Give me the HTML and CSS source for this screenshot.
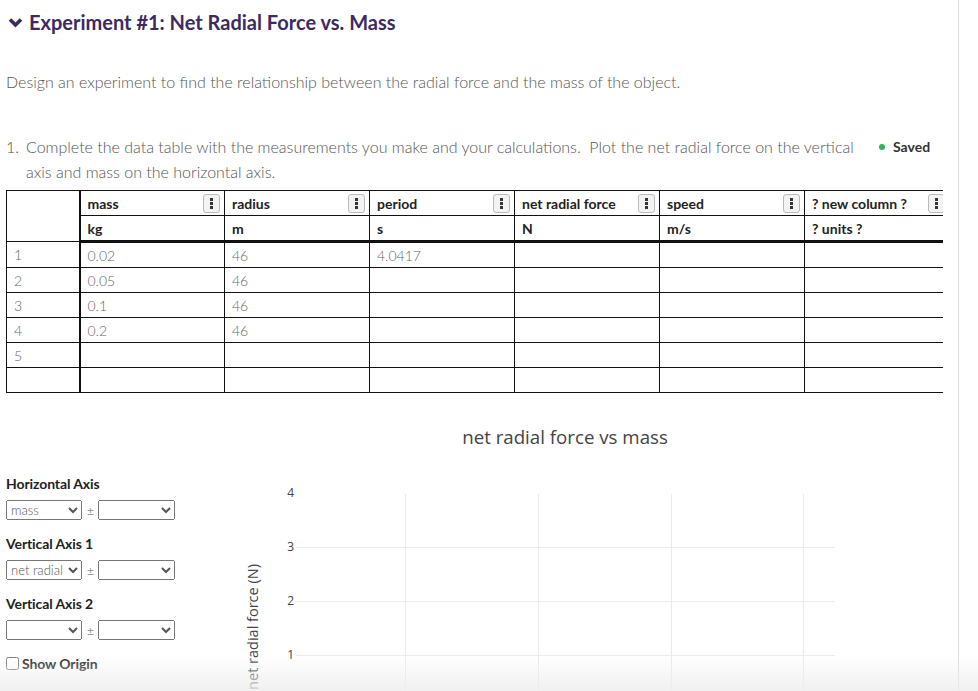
FILE: index.html
```html
<!DOCTYPE html>
<html lang="en">
<head>
    <meta charset="UTF-8">
    <meta name="viewport" content="width=device-width, initial-scale=1.0">
    <title>Experiment #1: Net Radial Force vs. Mass</title>
    <link rel="stylesheet" href="styles.css">
</head>
<body>
    <div class="page">
        <h2 class="exp-title">
            <svg class="chevron" width="15" height="11" viewBox="0 0 15 11"><polyline points="2,2.5 7.5,8 13,2.5" fill="none" stroke="#3c2a62" stroke-width="3.6"/></svg>
            Experiment #1: Net Radial Force vs. Mass
        </h2>

        <p class="intro">Design an experiment to find the relationship between the radial force and the mass of the object.</p>

        <div class="question">
            <div class="q-num">1.</div>
            <div class="q-text">Complete the data table with the measurements you make and your calculations.&nbsp; Plot the net radial force on the vertical axis and mass on the horizontal axis.</div>
            <div class="saved"><span class="dot"></span>Saved</div>
        </div>

        <div class="table-wrap">
            <table class="data-table">
                <colgroup>
                    <col class="c-idx">
                    <col class="c-val"><col class="c-val"><col class="c-val">
                    <col class="c-val"><col class="c-val"><col class="c-val">
                </colgroup>
                <thead>
                    <tr class="name-row">
                        <th class="idx" rowspan="2"></th>
                        <th><div class="col-name"><span>mass</span><button class="menu-btn"><svg width="3" height="11" viewBox="0 0 3 11"><rect y="0" width="3" height="3"/><rect y="4" width="3" height="3"/><rect y="8" width="3" height="3"/></svg></button></div></th>
                        <th><div class="col-name"><span>radius</span><button class="menu-btn"><svg width="3" height="11" viewBox="0 0 3 11"><rect y="0" width="3" height="3"/><rect y="4" width="3" height="3"/><rect y="8" width="3" height="3"/></svg></button></div></th>
                        <th><div class="col-name"><span>period</span><button class="menu-btn"><svg width="3" height="11" viewBox="0 0 3 11"><rect y="0" width="3" height="3"/><rect y="4" width="3" height="3"/><rect y="8" width="3" height="3"/></svg></button></div></th>
                        <th><div class="col-name"><span>net radial force</span><button class="menu-btn"><svg width="3" height="11" viewBox="0 0 3 11"><rect y="0" width="3" height="3"/><rect y="4" width="3" height="3"/><rect y="8" width="3" height="3"/></svg></button></div></th>
                        <th><div class="col-name"><span>speed</span><button class="menu-btn"><svg width="3" height="11" viewBox="0 0 3 11"><rect y="0" width="3" height="3"/><rect y="4" width="3" height="3"/><rect y="8" width="3" height="3"/></svg></button></div></th>
                        <th><div class="col-name"><span>? new column ?</span><button class="menu-btn"><svg width="3" height="11" viewBox="0 0 3 11"><rect y="0" width="3" height="3"/><rect y="4" width="3" height="3"/><rect y="8" width="3" height="3"/></svg></button></div></th>
                    </tr>
                    <tr class="unit-row">
                        <th>kg</th>
                        <th>m</th>
                        <th>s</th>
                        <th>N</th>
                        <th>m/s</th>
                        <th>? units ?</th>
                    </tr>
                </thead>
                <tbody>
                    <tr><td class="idx">1</td><td>0.02</td><td>46</td><td>4.0417</td><td></td><td></td><td></td></tr>
                    <tr><td class="idx">2</td><td>0.05</td><td>46</td><td></td><td></td><td></td><td></td></tr>
                    <tr><td class="idx">3</td><td>0.1</td><td>46</td><td></td><td></td><td></td><td></td></tr>
                    <tr><td class="idx">4</td><td>0.2</td><td>46</td><td></td><td></td><td></td><td></td></tr>
                    <tr><td class="idx">5</td><td></td><td></td><td></td><td></td><td></td><td></td></tr>
                    <tr><td class="idx"></td><td></td><td></td><td></td><td></td><td></td><td></td></tr>
                </tbody>
            </table>
        </div>

        <div class="analysis">
            <div class="controls">
                <div class="axis-group">
                    <div class="axis-label">Horizontal Axis</div>
                    <div class="axis-selects">
                        <select class="axis-select"><option>mass</option></select>
                        <span class="pm">±</span>
                        <select class="axis-select err-select"><option></option></select>
                    </div>
                </div>
                <div class="axis-group">
                    <div class="axis-label">Vertical Axis 1</div>
                    <div class="axis-selects">
                        <select class="axis-select"><option>net radial force</option></select>
                        <span class="pm">±</span>
                        <select class="axis-select err-select"><option></option></select>
                    </div>
                </div>
                <div class="axis-group">
                    <div class="axis-label">Vertical Axis 2</div>
                    <div class="axis-selects">
                        <select class="axis-select"><option></option></select>
                        <span class="pm">±</span>
                        <select class="axis-select err-select"><option></option></select>
                    </div>
                </div>
                <label class="origin"><input type="checkbox"> Show Origin</label>
            </div>

            <div class="chart">
                <svg width="712" height="300" viewBox="0 0 712 300">
                    <text class="chart-title" x="335" y="23" text-anchor="middle">net radial force vs mass</text>
                    <g stroke="#ebebeb" stroke-width="1">
                        <line x1="66" y1="126.5" x2="605" y2="126.5"/>
                        <line x1="66" y1="180.5" x2="605" y2="180.5"/>
                        <line x1="66" y1="234.5" x2="605" y2="234.5"/>
                        <line x1="175.5" y1="73" x2="175.5" y2="300"/>
                        <line x1="308.5" y1="73" x2="308.5" y2="300"/>
                        <line x1="441.5" y1="73" x2="441.5" y2="300"/>
                        <line x1="573.5" y1="73" x2="573.5" y2="300"/>
                    </g>
                    <g class="tick" text-anchor="end">
                        <text x="64" y="76">4</text>
                        <text x="64" y="130">3</text>
                        <text x="64" y="184">2</text>
                        <text x="64" y="238">1</text>
                    </g>
                    <text class="axis-title" transform="translate(28,206) rotate(-90)" text-anchor="middle">net radial force (N)</text>
                </svg>
            </div>
        </div>
    </div>
    <div class="bottom-fade"></div>
</body>
</html>
```

FILE: styles.css
```css
body {
    margin: 0;
    font-family: Lato, "Open Sans", sans-serif;
    color: #333;
    background: #fff;
}
.page {
    width: 952px;
    height: 691px;
    padding-left: 6px;
    border-right: 1px solid #ddd;
    overflow: hidden;
}
.exp-title {
    display: flex;
    align-items: center;
    margin: 10px 0 0 2px;
    font-size: 20px;
    line-height: 24px;
    font-weight: 700;
    color: #3c2a62;
}
.chevron {
    margin-right: 6px;
}
.intro {
    margin: 35px 0 0;
    font-size: 16px;
    font-weight: 300;
    line-height: 25px;
    color: #555;
}
.question {
    display: flex;
    margin-top: 40px;
    font-size: 16px;
    font-weight: 300;
    line-height: 25px;
    color: #555;
}
.q-num {
    width: 20px;
    flex: none;
}
.q-text {
    width: 838px;
}
.saved {
    display: flex;
    align-items: flex-start;
    margin-left: 15px;
    font-size: 14px;
    font-weight: 700;
    color: #333;
}
.dot {
    width: 6px;
    height: 6px;
    margin: 10px 8px 0 0;
    border-radius: 50%;
    background: #2eb552;
}
.table-wrap {
    width: 937px;
    overflow: hidden;
    margin-top: 6px;
}
.data-table {
    border-collapse: collapse;
    table-layout: fixed;
    width: 943px;
    font-size: 14px;
}
.c-idx {
    width: 73px;
}
.c-val {
    width: 145px;
}
.data-table th,
.data-table td {
    border: 1px solid #111;
    height: 24px;
    padding: 0 7px;
    text-align: left;
    vertical-align: middle;
    overflow: hidden;
    white-space: nowrap;
}
.data-table th {
    font-weight: 700;
    color: #222;
}
.data-table td {
    font-weight: 300;
    color: #666;
}
.data-table .idx {
    border-right: 2px solid #111;
}
.unit-row th {
    border-bottom: 3px solid #111;
}
.name-row th {
    padding-right: 4px;
}
.col-name {
    display: flex;
    align-items: center;
    justify-content: space-between;
}
.menu-btn {
    display: flex;
    align-items: center;
    justify-content: center;
    width: 17px;
    height: 19px;
    padding: 0;
    border: 1px solid #bbb;
    border-radius: 3px;
    background: #f3f3f3;
    fill: #333;
}
.analysis {
    display: flex;
    margin-top: 28px;
}
.controls {
    width: 224px;
    flex: none;
    padding-top: 54px;
}
.axis-group {
    margin-bottom: 15px;
}
.axis-label {
    font-size: 14px;
    font-weight: 700;
    line-height: 18px;
    color: #222;
    letter-spacing: -0.1px;
}
.axis-selects {
    display: flex;
    align-items: center;
    margin-top: 7px;
}
.axis-select {
    width: 76px;
    height: 20px;
    font-family: Lato, sans-serif;
    font-size: 13px;
    font-weight: 300;
    color: #555;
}
.err-select {
    width: 77px;
}
.pm {
    margin: 0 4px 0 5px;
    font-size: 12px;
    color: #999;
}
.origin {
    display: flex;
    align-items: center;
    font-size: 14px;
    font-weight: 700;
    color: #222;
    letter-spacing: -0.1px;
}
.origin input {
    margin: 0 3px 0 0;
}
.chart svg {
    display: block;
}
.chart-title {
    font-family: "Open Sans", sans-serif;
    font-size: 18.7px;
    fill: #444;
}
.tick {
    font-family: "Open Sans", sans-serif;
    font-size: 12px;
    fill: #444;
}
.axis-title {
    font-family: "Open Sans", sans-serif;
    font-size: 14.5px;
    fill: #444;
}
.bottom-fade {
    position: fixed;
    left: 0;
    right: 0;
    bottom: 0;
    height: 36px;
    background: linear-gradient(to bottom, rgba(238, 238, 238, 0), rgba(238, 238, 238, 0.85));
    pointer-events: none;
}
```
